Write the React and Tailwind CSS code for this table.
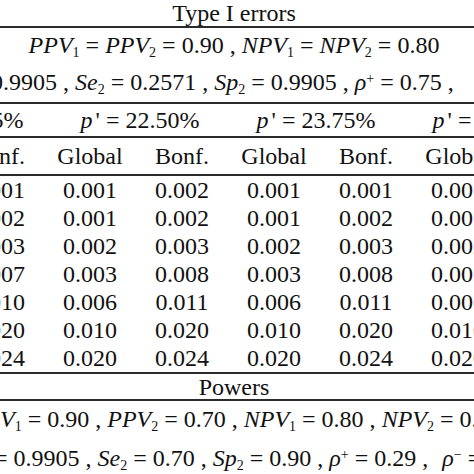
import React from 'react';

// italic variable, subscript and superscript for the formula rows
const I = ({ children }) => <i className="italic">{children}</i>;
const Sub = ({ children }) => <span className="text-[14px] not-italic align-[-4px]">{children}</span>;
const Sup = ({ children }) => <span className="text-[14px] not-italic align-[7px]">{children}</span>;

const Rule = () => <div className="h-[2px] bg-[#2b2b2b]" />;

const pairs = ['21.25', '22.50', '23.75', '25.00'];

// 8 columns: Global / Bonf. for each p'
const rows = [
  ['0.001', '0.001', '0.001', '0.002', '0.001', '0.001', '0.001', '0.002'],
  ['0.001', '0.002', '0.001', '0.002', '0.001', '0.002', '0.001', '0.002'],
  ['0.002', '0.003', '0.002', '0.003', '0.002', '0.003', '0.002', '0.003'],
  ['0.003', '0.007', '0.003', '0.008', '0.003', '0.008', '0.003', '0.008'],
  ['0.006', '0.010', '0.006', '0.011', '0.006', '0.011', '0.006', '0.011'],
  ['0.010', '0.020', '0.010', '0.020', '0.010', '0.020', '0.010', '0.020'],
  ['0.020', '0.024', '0.020', '0.024', '0.020', '0.024', '0.020', '0.024'],
];

const App = () => {
  return (
    <div className="w-[474px] h-[474px] overflow-hidden bg-white text-[#111111] font-['Liberation_Serif','Times_New_Roman',serif] text-[24px] leading-none">
      <div className="-ml-[146px] w-[760px] flex flex-col whitespace-nowrap">
        <div className="h-[26px] flex items-center justify-center">Type I errors</div>
        <Rule />

        <div className="h-[37px] flex items-center justify-center">
          <span>
            <I>PPV</I><Sub>1</Sub> = <I>PPV</I><Sub>2</Sub> = 0.90 , <I>NPV</I><Sub>1</Sub> = <I>NPV</I><Sub>2</Sub> = 0.80
          </span>
        </div>
        <div className="h-[37px] flex items-center">
          <div className="w-[137px] shrink-0 flex justify-end">
            <span><I>Se</I><Sub>1</Sub> = 0.2571 , <I>Sp</I><Sub>1</Sub> = </span>
          </div>
          <span>
            0.9905 , <I>Se</I><Sub>2</Sub> = 0.2571 , <I>Sp</I><Sub>2</Sub> = 0.9905 , <I>ρ</I><Sup>+</Sup> = 0.75 ,
            <span className="ml-[22px]"><I>ρ</I><Sup>−</Sup> = 0.75</span>
          </span>
        </div>
        <Rule />

        <div className="h-[32px] flex items-center pl-[22px]">
          {pairs.map((v) => (
            <div key={v} className="w-[176px] shrink-0 text-center">
              <span>
                <I>p</I><span className="ml-[3px]">'</span> = {v}%
              </span>
            </div>
          ))}
        </div>
        <Rule />

        <div className="h-[36px] flex items-center pl-[6px]">
          {pairs.map((v) => (
            <React.Fragment key={v}>
              <div className="w-[92px] shrink-0 text-center">Global</div>
              <div className="w-[92px] shrink-0 text-center">Bonf.</div>
            </React.Fragment>
          ))}
        </div>
        <Rule />

        <div className="flex flex-col">
          {rows.map((r, i) => (
            <div key={i} className="h-[28px] flex items-center pl-[6px]">
              {r.map((c, j) => (
                <div key={j} className="w-[92px] shrink-0 text-center">{c}</div>
              ))}
            </div>
          ))}
        </div>
        <Rule />

        <div className="h-[25px] flex items-center justify-center">Powers</div>
        <Rule />

        <div className="h-[38px] flex items-center">
          <div className="w-[146px] shrink-0 flex justify-end">
            <span><I>PP</I></span>
          </div>
          <span>
            <I>V</I><Sub>1</Sub> = 0.90 , <I>PPV</I><Sub>2</Sub> = 0.70 , <I>NPV</I><Sub>1</Sub> = 0.80 , <I>NPV</I><Sub>2</Sub> = 0.70
          </span>
        </div>
        <div className="h-[40px] flex items-center">
          <div className="w-[140px] shrink-0 flex justify-end">
            <span><I>Se</I><Sub>1</Sub> = 0.70 , <I>Sp</I><Sub>1</Sub></span>
          </div>
          <span>
            {' '}= 0.9905 , <I>Se</I><Sub>2</Sub> = 0.70 , <I>Sp</I><Sub>2</Sub> = 0.90 , <I>ρ</I><Sup>+</Sup> = 0.29 ,
            <span className="ml-[14px]"><I>ρ</I><Sup>−</Sup> = 0.29</span>
          </span>
        </div>
      </div>
    </div>
  );
};

export default App;
